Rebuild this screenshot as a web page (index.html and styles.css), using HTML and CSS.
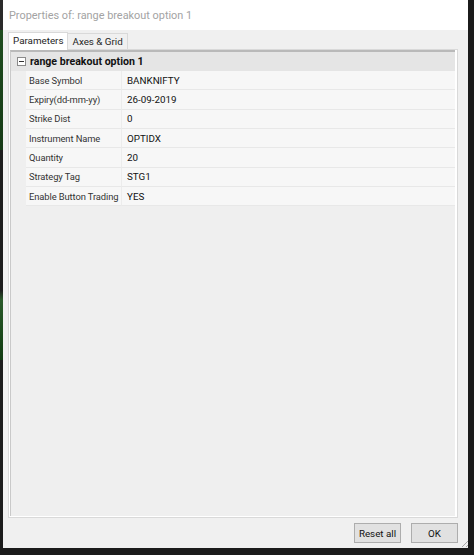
FILE: index.html
```html
<!DOCTYPE html>
<html>
<head>
  <title>Properties</title>
  <meta charset="utf-8">
  <link rel="stylesheet" href="styles.css">
</head>
<body>
  <div class="desk">
    <div class="dialog">
      <div class="dialog-title">Properties of: range breakout option 1</div>
      <div class="dialog-body">
        <div class="tabs">
          <span class="tab tab-active">Parameters</span>
          <span class="tab">Axes &amp; Grid</span>
        </div>
        <div class="tab-page">
          <div class="grid">
            <div class="grid-cat">
              <span class="cat-toggle"></span>
              <span class="cat-name">range breakout option 1</span>
            </div>
            <div class="grid-row"><span class="gutter"></span><span class="prop-name">Base Symbol</span><span class="prop-value">BANKNIFTY</span></div>
            <div class="grid-row"><span class="gutter"></span><span class="prop-name">Expiry(dd-mm-yy)</span><span class="prop-value">26-09-2019</span></div>
            <div class="grid-row"><span class="gutter"></span><span class="prop-name">Strike Dist</span><span class="prop-value">0</span></div>
            <div class="grid-row"><span class="gutter"></span><span class="prop-name">Instrument Name</span><span class="prop-value">OPTIDX</span></div>
            <div class="grid-row"><span class="gutter"></span><span class="prop-name">Quantity</span><span class="prop-value">20</span></div>
            <div class="grid-row"><span class="gutter"></span><span class="prop-name">Strategy Tag</span><span class="prop-value">STG1</span></div>
            <div class="grid-row"><span class="gutter"></span><span class="prop-name">Enable Button Trading</span><span class="prop-value">YES</span></div>
          </div>
        </div>
        <div class="buttons">
          <button class="btn">Reset all</button>
          <button class="btn">OK</button>
          <span class="grip"></span>
        </div>
      </div>
    </div>
  </div>
</body>
</html>
```

FILE: styles.css
```css
body {
  margin: 0;
  background: #1b1b1b;
  font-family: Roboto, "Liberation Sans", sans-serif;
  font-size: 9.8px;
  color: #1e1e1e;
}
.desk {
  height: 555px;
  padding: 0 6px 7px 3px;
  box-sizing: border-box;
  display: flex;
  background: linear-gradient(#2a2a2a 0, #2a2a2a 30px, #1f4d1f 30px, #163a16 150px, #1b1b1b 150px, #1b1b1b 290px, #2a5a2a 300px, #123d12 360px, #1b1b1b 360px) left top / 3px 100% no-repeat;
}
.dialog {
  flex: 1;
  display: flex;
  flex-direction: column;
  background: #f0f0f0;
}
.dialog-title {
  height: 30px;
  line-height: 31px;
  padding-left: 6px;
  background: #fff;
  color: #a3a3a3;
  font-size: 10.9px;
}
.dialog-body {
  flex: 1;
  display: flex;
  flex-direction: column;
  padding: 2px 10px 0 5px;
}
.tabs {
  display: flex;
  align-items: flex-end;
  height: 17px;
}
.tab {
  height: 16px;
  line-height: 16px;
  padding: 0 4px;
  border: 1px solid #d9d9d9;
  border-bottom: none;
  box-sizing: border-box;
  background: #f0f0f0;
}
.tab-active {
  height: 18px;
  line-height: 16px;
  background: #fff;
  margin-bottom: -1px;
  position: relative;
  z-index: 1;
}
.tab + .tab {
  border-left: none;
}
.tab-page {
  height: 469px;
  box-sizing: border-box;
  border: 1px solid #d9d9d9;
  background: #fff;
  padding: 0 2px 1px 1px;
  display: flex;
}
.grid {
  flex: 1;
  border-top: 2px solid #b9b9b9;
  border-left: 1px solid #c9c9c9;
  background: #efefef;
}
.grid-cat {
  height: 19px;
  display: flex;
  align-items: center;
  background: #e5e5e5;
}
.cat-toggle {
  width: 7px;
  height: 7px;
  margin: 0 4px 0 6px;
  border: 1px solid #8a8a8a;
  background: #fff;
  position: relative;
}
.cat-toggle::after {
  content: "";
  position: absolute;
  left: 1px;
  right: 1px;
  top: 3px;
  height: 1px;
  background: #333;
}
.cat-name {
  font-weight: bold;
  font-size: 10.6px;
  color: #111;
}
.grid-row {
  height: 19.33px;
  display: flex;
  align-items: stretch;
}
.gutter {
  width: 15px;
  flex-shrink: 0;
  background: #efefef;
}
.prop-name, .prop-value {
  display: flex;
  align-items: center;
  white-space: nowrap;
  background: #f7f7f7;
  border-bottom: 1px solid #e8e8e8;
  box-sizing: border-box;
}
.prop-name {
  width: 96px;
  flex-shrink: 0;
  padding-left: 3px;
  border-right: 1px solid #ececec;
  color: #333;
  font-size: 9.4px;
  letter-spacing: -0.1px;
}
.prop-value {
  flex: 1;
  padding-left: 5px;
  color: #111;
}
.buttons {
  flex: 1;
  display: flex;
  justify-content: flex-end;
  align-items: flex-start;
  gap: 10px;
  padding-top: 5px;
  position: relative;
}
.btn {
  height: 20px;
  width: 47px;
  padding: 0;
  font: inherit;
  color: #111;
  background: #e1e1e1;
  border: 1px solid #adadad;
}
.grip {
  position: absolute;
  right: -10px;
  bottom: 1px;
  width: 9px;
  height: 9px;
  background: repeating-linear-gradient(135deg, transparent 0 2px, #a8a8a8 2px 3px);
  clip-path: polygon(100% 0, 100% 100%, 0 100%);
}
```
